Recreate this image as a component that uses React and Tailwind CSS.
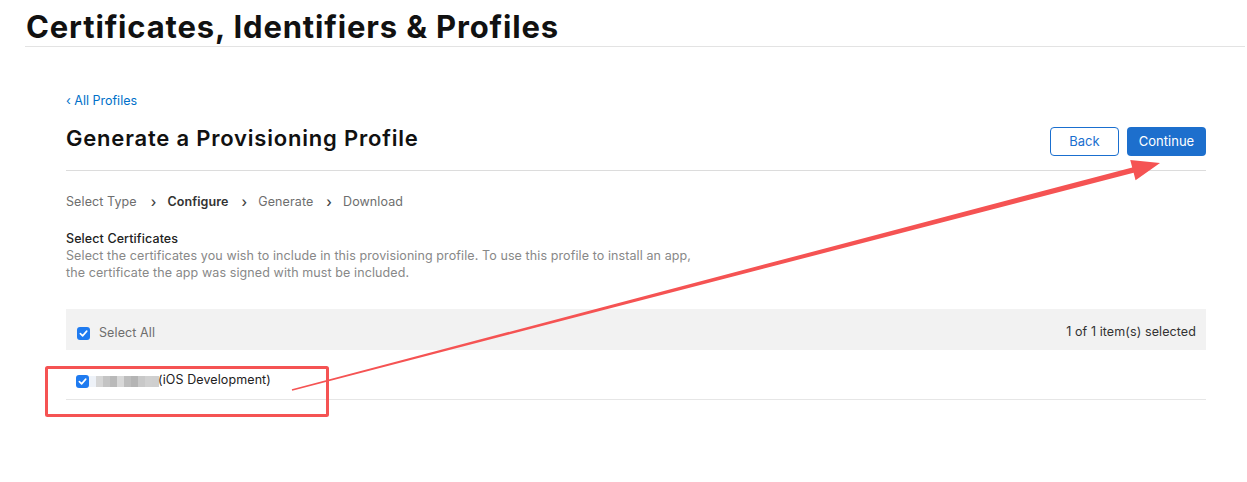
import React from "react";

function Check({className}) {
    return (
        <span className={"inline-flex items-center justify-center w-[13px] h-[13px] rounded-[3px] bg-[#1f7bf0] " + (className || "")}>
            <svg width="9" height="9" viewBox="0 0 10 10" fill="none">
                <path d="M1.5 5.2 L4 7.6 L8.6 2.4" stroke="white" strokeWidth="1.8" strokeLinecap="round" strokeLinejoin="round"/>
            </svg>
        </span>
    );
}

function Blur() {
    // pixelated redacted name
    const blocks = ["#eef2f8", "#d6d6d6", "#c4c4c4", "#b9b9b9", "#d8d8d8", "#bdbdbd", "#b4b4b4", "#c8c8c8", "#d0d0d0", "#cfcfcf"];
    return (
        <span className="inline-flex h-[11px] items-center">
            {blocks.map((c, i) => (
                <span key={i} className="w-[7px] h-[11px]" style={{background: c}}/>
            ))}
        </span>
    );
}

function Annotations() {
    // arrow from the red box to Continue
    const sx = 292, sy = 390, tx = 1160, ty = 163;
    const dx = tx - sx, dy = ty - sy;
    const len = Math.hypot(dx, dy);
    const ux = dx / len, uy = dy / len;
    const nx = -uy, ny = ux;
    const headLen = 28, headW = 10.5;
    const bx = tx - ux * headLen, by = ty - uy * headLen;
    const w0 = 0.8, w1 = 2.8;
    const pts = [
        [sx + nx * w0, sy + ny * w0],
        [bx + nx * w1, by + ny * w1],
        [bx + nx * headW, by + ny * headW],
        [tx, ty],
        [bx - nx * headW, by - ny * headW],
        [bx - nx * w1, by - ny * w1],
        [sx - nx * w0, sy - ny * w0],
    ].map(p => p.join(",")).join(" ");

    return (
        <svg className="absolute top-0 left-0 pointer-events-none" width="1247" height="482">
            <rect x="46.5" y="367.5" width="281" height="48" fill="none" stroke="#f55353" strokeWidth="3" rx="1"/>
            <polygon points={pts} fill="#f55353"/>
        </svg>
    );
}

function App() {
    return (
        <div className="relative w-[1247px] h-[482px] bg-white overflow-hidden text-[#333]" style={{fontFamily: "Inter, 'Noto Sans', sans-serif"}}>
            <div className="ml-[25px] mr-[2px] pl-[1px] h-[47px] border-b border-[#e3e3e3]">
                <h1 className="text-[31px] leading-[54px] font-bold text-[#111] tracking-[0.85px]">Certificates, Identifiers &amp; Profiles</h1>
            </div>

            <div className="pl-[66px] pr-[41px]">
                <div className="pt-[45px] text-[12.5px] leading-[18px] text-[#0070c9]">‹ All Profiles</div>

                <div className="flex items-end justify-between mt-[14px] pb-[13px] border-b border-[#dcdcdc]">
                    <h2 className="text-[22px] leading-[28px] font-semibold text-[#111] tracking-[0.8px] mb-[5px]">Generate a Provisioning Profile</h2>
                    <div className="flex gap-[8px] mb-[1px]">
                        <button className="w-[69px] h-[29px] rounded-[4px] border border-[#1a6fcf] text-[#1a6fcf] text-[13px]">Back</button>
                        <button className="w-[79px] h-[29px] rounded-[4px] bg-[#1d6fcd] text-white text-[13px]">Continue</button>
                    </div>
                </div>

                <div className="flex items-center mt-[22px] text-[12.5px] leading-[18px] text-[#6e6e6e] tracking-[0.1px]">
                    <span>Select Type</span>
                    <span className="ml-[14px] mr-[11px] text-[#444] text-[14px] font-medium">›</span>
                    <span className="font-semibold text-[#333]">Configure</span>
                    <span className="ml-[13px] mr-[11px] text-[#444] text-[14px] font-medium">›</span>
                    <span>Generate</span>
                    <span className="ml-[13px] mr-[11px] text-[#444] text-[14px] font-medium">›</span>
                    <span>Download</span>
                </div>

                <div className="mt-[19px] text-[12.5px] leading-[17px] font-medium text-[#222] tracking-[0.1px]">Select Certificates</div>
                <p className="text-[12.5px] leading-[17px] text-[#888] w-[635px] tracking-[0.1px]">
                    Select the certificates you wish to include in this provisioning profile. To use this profile to install an app, the certificate the app was signed with must be included.
                </p>

                <div className="mt-[28px] h-[41px] bg-[#f2f2f2] flex items-center justify-between pl-[11px] pr-[10px] text-[12.5px] tracking-[0.1px]">
                    <div className="flex items-center gap-[9px] mt-[8px]">
                        <Check/>
                        <span className="text-[#6e6e6e]">Select All</span>
                    </div>
                    <span className="text-[#333] mt-[5px]">1 of 1 item(s) selected</span>
                </div>

                <div className="h-[50px] border-b border-[#e6e6e6] flex items-center pl-[10px] text-[12.5px] text-[#222] tracking-[0.1px]">
                    <div className="flex items-center mt-[13px]">
                        <Check/>
                        <Blur/>
                        <span className="-ml-[1px] mt-[-1px]">(iOS Development)</span>
                    </div>
                </div>
            </div>

            <Annotations/>
        </div>
    );
}

export default App;
